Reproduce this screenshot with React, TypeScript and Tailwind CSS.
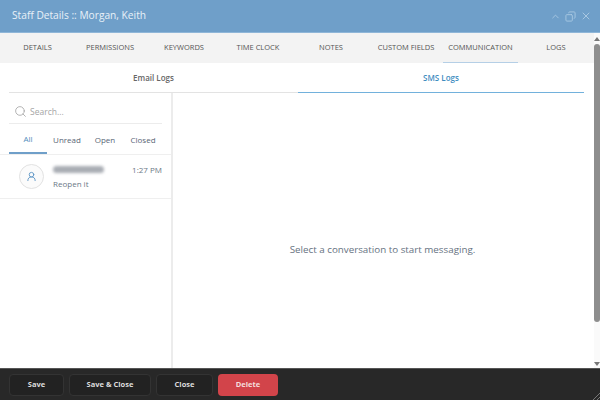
import { ChevronUp, Copy, X, Search, UserRound } from 'lucide-react';

const tabs = [
  { label: 'DETAILS', width: 'w-[75px]' },
  { label: 'PERMISSIONS', width: 'w-[70px]' },
  { label: 'KEYWORDS', width: 'w-[78px]' },
  { label: 'TIME CLOCK', width: 'w-[70px]' },
  { label: 'NOTES', width: 'w-[76px]' },
  { label: 'CUSTOM FIELDS', width: 'w-[74px]' },
  { label: 'COMMUNICATION', width: 'w-[75px]' },
  { label: 'LOGS', width: 'w-[76px]' },
];

const filters = [
  { label: 'All', width: 'w-[38px]', active: true },
  { label: 'Unread', width: 'w-[40px]' },
  { label: 'Open', width: 'w-[36px]' },
  { label: 'Closed', width: 'w-[40px]' },
];

const footerButton = 'h-[22px] rounded-sm bg-[#222] border border-[#333] text-[7.5px] font-bold text-[#ddd]';

export default function App() {
  return (
    <div className="relative w-[600px] h-[400px] flex flex-col overflow-hidden bg-white font-['Open_Sans',sans-serif]">
      {/* Title bar */}
      <div className="h-[33px] shrink-0 bg-[#6f9fc9] border-b border-[#8fb6d8] flex items-center justify-between pl-3 pr-[8px]">
        <span className="text-[10.2px] text-[#e9f1f8]">Staff Details :: Morgan, Keith</span>
        <div className="flex items-center gap-[4px] text-[#a9c8e2]">
          <ChevronUp className="w-[11px] h-[11px]" strokeWidth={2} />
          <Copy className="w-[11px] h-[11px] -scale-x-100" strokeWidth={2} />
          <X className="w-[12px] h-[12px]" strokeWidth={2} />
        </div>
      </div>

      <div className="flex-1 min-h-0 flex">
        <div className="flex-1 min-w-0 flex flex-col">
          {/* Main tabs */}
          <div className="h-[30px] shrink-0 bg-[#f3f3f3] flex">
            {tabs.map((tab) => (
              <div
                key={tab.label}
                className={`${tab.width} shrink-0 flex items-center justify-center text-[7.5px] whitespace-nowrap text-[#555] ${
                  tab.label === 'COMMUNICATION' ? 'border-b border-[#b5cfe6]' : ''
                }`}
              >
                {tab.label}
              </div>
            ))}
          </div>

          {/* Log tabs */}
          <div className="h-[30px] shrink-0 flex pl-[9px] pr-[10px]">
            <div className="w-[289px] flex items-center justify-center border-b border-[#e3e3e3] text-[8px] font-semibold text-[#666]">
              Email Logs
            </div>
            <div className="flex-1 flex items-center justify-center border-b border-[#72b1dc] text-[8px] font-semibold text-[#3f8dbf]">
              SMS Logs
            </div>
          </div>

          <div className="flex-1 min-h-0 flex">
            {/* Conversations */}
            <div className="w-[173px] shrink-0 border-r-2 border-[#ececec] flex flex-col">
              <div className="h-[29px] mx-[9px] mt-[2px] pt-[7px] shrink-0 flex items-center gap-[3px] border-b border-[#ececec]">
                <Search className="w-[13px] h-[13px] ml-[5px] -mt-[3px] text-[#a2a2a2]" strokeWidth={1.5} />
                <span className="text-[8.5px] text-[#a5a5a5]">Search...</span>
              </div>
              <div className="h-[31px] shrink-0 flex pl-[9px] border-b border-[#efefef]">
                {filters.map((filter) => (
                  <div
                    key={filter.label}
                    className={`${filter.width} pt-[2px] flex items-center justify-center text-[8px] ${
                      filter.active
                        ? 'border-b-2 border-[#6f9fc9] text-[#4f8cbd]'
                        : 'text-[#596675]'
                    }`}
                  >
                    {filter.label}
                  </div>
                ))}
              </div>
              <div className="h-[44px] shrink-0 border-b border-[#efefef] flex pl-[19px] pr-[9px]">
                <div className="w-[25px] h-[25px] mt-[9px] rounded-full border border-[#e2e2e2] bg-[#fbfbfb] flex items-center justify-center">
                  <UserRound className="w-[11px] h-[11px] text-[#5f97c6]" strokeWidth={2} />
                </div>
                <div className="ml-[9px] flex-1 min-w-0 pt-[11px]">
                  <div className="w-[51px] h-[7px] rounded-sm bg-[#a9adb4] blur-[1.5px]" />
                  <div className="mt-[5px] text-[8px] leading-[12px] text-[#6b7886]">Reopen it</div>
                </div>
                <span className="pt-[9px] text-[8px] leading-[12px] text-[#6b7886]">1:27 PM</span>
              </div>
            </div>

            {/* Empty message */}
            <div className="flex-1 flex items-center justify-center pt-[40px] pr-[2px] text-[9.8px] text-[#66727f]">
              Select a conversation to start messaging.
            </div>
          </div>
        </div>

        {/* Scrollbar */}
        <div className="w-[6px] shrink-0 bg-[#fafafa] flex flex-col items-center">
          <div className="mt-[4px] border-x-[3px] border-b-[4px] border-x-transparent border-b-[#777]" />
          <div className="w-[6px] h-[278px] mt-[3px] rounded-sm bg-[#8e8e8e]" />
          <div className="mt-auto mb-[2px] border-x-[3px] border-t-[4px] border-x-transparent border-t-[#777]" />
        </div>
      </div>

      {/* Footer */}
      <div className="h-[32px] shrink-0 bg-[#282828] border-t border-[#555] flex items-center gap-[5px] pl-[9px]">
        <button className={`w-[55px] ${footerButton}`}>Save</button>
        <button className={`w-[82px] ${footerButton}`}>Save &amp; Close</button>
        <button className={`w-[57px] ${footerButton}`}>Close</button>
        <button className="w-[60px] h-[22px] rounded-sm bg-[#d2444a] text-[7.5px] font-bold text-[#f5dddd]">Delete</button>
      </div>

      {/* Resize grip */}
      <svg className="absolute right-0 bottom-0 w-[7px] h-[7px]" viewBox="0 0 7 7">
        <path d="M0 7 7 0M4 7 7 4" stroke="#777" strokeWidth="1" />
      </svg>
    </div>
  );
}
